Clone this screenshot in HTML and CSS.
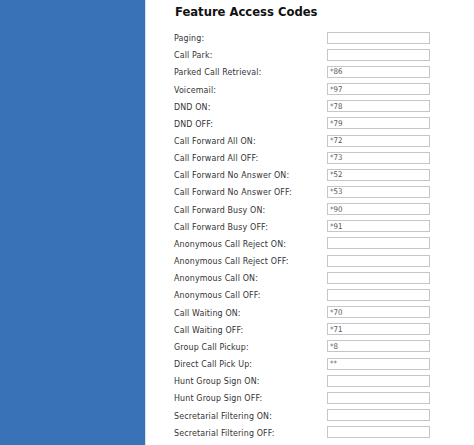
FILE: index.html
```html
<!DOCTYPE html>
<html>
<head>
<meta charset="utf-8">
<link rel="stylesheet" href="styles.css">
</head>
<body>
<div class="page">
  <aside class="sidebar"></aside>
  <main class="main">
    <h1 class="title">Feature Access Codes</h1>
    <div class="codes">
      <label class="lbl">Paging:</label><input class="fld" value="">
      <label class="lbl">Call Park:</label><input class="fld" value="">
      <label class="lbl">Parked Call Retrieval:</label><input class="fld" value="*86">
      <label class="lbl">Voicemail:</label><input class="fld" value="*97">
      <label class="lbl">DND ON:</label><input class="fld" value="*78">
      <label class="lbl">DND OFF:</label><input class="fld" value="*79">
      <label class="lbl">Call Forward All ON:</label><input class="fld" value="*72">
      <label class="lbl">Call Forward All OFF:</label><input class="fld" value="*73">
      <label class="lbl">Call Forward No Answer ON:</label><input class="fld" value="*52">
      <label class="lbl">Call Forward No Answer OFF:</label><input class="fld" value="*53">
      <label class="lbl">Call Forward Busy ON:</label><input class="fld" value="*90">
      <label class="lbl">Call Forward Busy OFF:</label><input class="fld" value="*91">
      <label class="lbl">Anonymous Call Reject ON:</label><input class="fld" value="">
      <label class="lbl">Anonymous Call Reject OFF:</label><input class="fld" value="">
      <label class="lbl">Anonymous Call ON:</label><input class="fld" value="">
      <label class="lbl">Anonymous Call OFF:</label><input class="fld" value="">
      <label class="lbl">Call Waiting ON:</label><input class="fld" value="*70">
      <label class="lbl">Call Waiting OFF:</label><input class="fld" value="*71">
      <label class="lbl">Group Call Pickup:</label><input class="fld" value="*8">
      <label class="lbl">Direct Call Pick Up:</label><input class="fld" value="**">
      <label class="lbl">Hunt Group Sign ON:</label><input class="fld" value="">
      <label class="lbl">Hunt Group Sign OFF:</label><input class="fld" value="">
      <label class="lbl">Secretarial Filtering ON:</label><input class="fld" value="">
      <label class="lbl">Secretarial Filtering OFF:</label><input class="fld" value="">
    </div>
  </main>
</div>
</body>
</html>
```
FILE: styles.css
```css
html, body {
  margin: 0;
  padding: 0;
  background: #ffffff;
}
.page {
  display: flex;
  height: 445px;
  overflow: hidden;
}
.sidebar {
  width: 145px;
  flex: none;
  background: #3a72b8;
  border-right: 1px solid #cfe0f2;
}
.main {
  flex: 1;
  padding-left: 28px;
  font-family: "DejaVu Sans Condensed", "DejaVu Sans", Verdana, sans-serif;
}
.title {
  margin: 3px 0 0 1px;
  font-size: 12.9px;
  font-weight: bold;
  line-height: 17px;
  color: #111;
}
.codes {
  display: grid;
  grid-template-columns: 153px 103px;
  grid-auto-rows: 17.16px;
  align-items: center;
  margin-top: 9px;
}
.lbl {
  font-size: 8.8px;
  letter-spacing: 0.15px;
  color: #333;
  white-space: nowrap;
  padding-top: 1px;
}
.fld {
  box-sizing: border-box;
  width: 103px;
  height: 12px;
  margin: 0;
  padding: 0 2px;
  border: 1px solid #c6c6c6;
  background: #fff;
  font-family: "DejaVu Sans Condensed", "DejaVu Sans", Verdana, sans-serif;
  font-size: 7.8px;
  color: #555;
  outline: none;
}
```
